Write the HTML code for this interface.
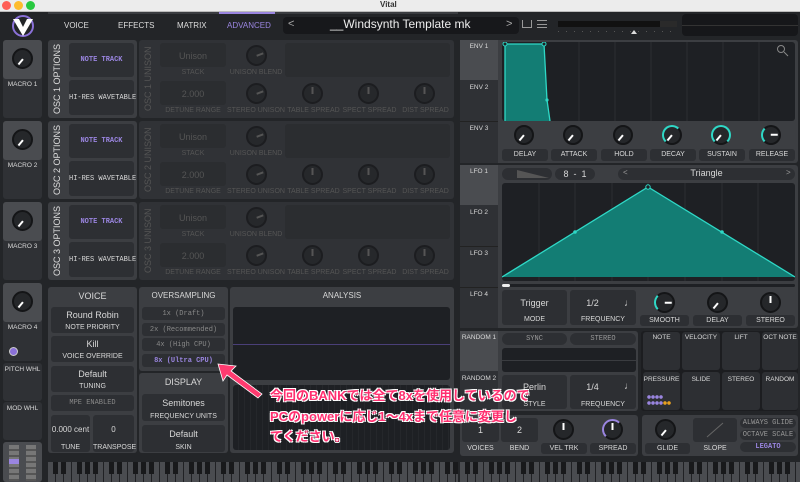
<!DOCTYPE html>
<html><head><meta charset="utf-8"><style>
*{box-sizing:border-box;margin:0;padding:0}
body{width:800px;height:482px;overflow:hidden;background:#232528;font-family:"Liberation Sans","Noto Sans CJK JP",sans-serif;position:relative;color:#ddd}
.a{position:absolute}
.p{position:absolute;background:#3c3e42;border-radius:3px}
.d{position:absolute;background:#2d2f33;border-radius:3px}
.g{position:absolute;background:#1e2024;border-radius:3px}
.l{position:absolute;font-size:7px;text-align:center;color:#d8d8d8;white-space:nowrap}
.m{font-family:"Liberation Mono",monospace}
.k{position:absolute;border-radius:50%;background:#25272a;border:2px solid #141517}
.k::after{content:'';position:absolute;left:50%;top:50%;width:1.5px;height:7px;margin-left:-1px;background:#fff;transform-origin:top;transform:rotate(40deg)}
.f::after{background:#555;transform:rotate(-110deg)}
.u::after{transform:rotate(180deg)}
.r::after{transform:rotate(-90deg)}
.v{position:absolute;writing-mode:vertical-rl;transform:rotate(180deg);font-size:9px;text-align:center}
.kb{position:absolute;top:462px;height:20px;background:
linear-gradient(90deg,transparent 5px,#18191b 5px 10px,transparent 10px 13px,#18191b 13px 18px,transparent 18px 29px,#18191b 29px 34px,transparent 34px 37px,#18191b 37px 42px,transparent 42px 45px,#18191b 45px 50px,transparent 50px) 0 0/56px 12px repeat-x,
repeating-linear-gradient(90deg,#4a4c50 0 7px,#202124 7px 8px)}
</style></head><body>
<div class="a" style="left:0;top:0;width:800px;height:12px;background:#ececec;border-bottom:1px solid #bbb"></div>
<div class="a" style="left:2px;top:1px;width:9px;height:9px;border-radius:50%;background:#fe5f57"></div>
<div class="a" style="left:14px;top:1px;width:9px;height:9px;border-radius:50%;background:#febc2e"></div>
<div class="a" style="left:26px;top:1px;width:9px;height:9px;border-radius:50%;background:#28c840"></div>
<div class="a" style="left:380px;top:0;font-size:8px;color:#333;font-weight:bold">Vital</div>
<div class="a" style="left:48px;top:12px;width:410px;height:2px;background:#3a3c40"></div>
<div class="a" style="left:219px;top:12px;width:56px;height:2px;background:#9a85e0"></div>
<svg class="a" style="left:10px;top:14px" width="26" height="24" viewBox="0 0 26 24"><circle cx="13" cy="12" r="10" fill="none" stroke="#8a70d8" stroke-width="2"/><path d="M3 5 L13 22 L23 5 L17 5 L13 13 L9 5Z" fill="#fff"/></svg>
<div class="a" style="left:64px;top:21px;font-size:8px;color:#ddd">VOICE</div>
<div class="a" style="left:118px;top:21px;font-size:8px;color:#ddd">EFFECTS</div>
<div class="a" style="left:177px;top:21px;font-size:8px;color:#ddd">MATRIX</div>
<div class="a" style="left:227px;top:21px;font-size:8px;color:#9a85e0">ADVANCED</div>
<div class="a" style="left:283px;top:17px;width:236px;height:17px;background:#17181b;border-radius:4px"></div>
<div class="a" style="left:288px;top:18px;font-size:11px;color:#aaa">&lt;</div>
<div class="a" style="left:506px;top:18px;font-size:11px;color:#aaa">&gt;</div>
<div class="a" style="left:330px;top:17px;font-size:12px;color:#eee">__Windsynth Template mk</div>
<div class="a" style="left:522px;top:20px;width:10px;height:8px;border:1px solid #999;border-top:none"></div>
<div class="a" style="left:537px;top:20px;width:10px;height:8px;border-top:1px solid #999;border-bottom:1px solid #999"></div>
<div class="a" style="left:537px;top:24px;width:10px;height:1px;background:#999"></div>
<div class="a" style="left:558px;top:21px;width:102px;height:6px;background:#111"></div>
<div class="a" style="left:660px;top:21px;width:17px;height:6px;background:#2a2a2a"></div>
<div class="a" style="left:558px;top:31px;width:120px;height:1px;background:repeating-linear-gradient(90deg,#555 0 1px,transparent 1px 8px)"></div>
<div class="a" style="left:631px;top:30px;width:0;height:0;border-left:3px solid transparent;border-right:3px solid transparent;border-bottom:4px solid #ddd"></div>
<div class="a" style="left:682px;top:14px;width:116px;height:22px;background:#16171a;border-radius:4px"></div>
<div class="a" style="left:682px;top:25px;width:116px;height:1px;background:#333"></div>

<div class="p" style="left:3px;top:40px;width:39px;height:78px;background:#2f3135"></div>
<div class="p" style="left:3px;top:40px;width:39px;height:39px;background:#4a4c50"></div>
<div class="k" style="left:12px;top:48px;width:21px;height:21px"></div>
<div class="l" style="left:3px;top:81px;width:39px;font-size:6.5px">MACRO 1</div>
<div class="p" style="left:3px;top:121px;width:39px;height:78px;background:#2f3135"></div>
<div class="p" style="left:3px;top:121px;width:39px;height:39px;background:#4a4c50"></div>
<div class="k" style="left:12px;top:129px;width:21px;height:21px"></div>
<div class="l" style="left:3px;top:162px;width:39px;font-size:6.5px">MACRO 2</div>
<div class="p" style="left:3px;top:202px;width:39px;height:78px;background:#2f3135"></div>
<div class="p" style="left:3px;top:202px;width:39px;height:39px;background:#4a4c50"></div>
<div class="k" style="left:12px;top:210px;width:21px;height:21px"></div>
<div class="l" style="left:3px;top:243px;width:39px;font-size:6.5px">MACRO 3</div>
<div class="p" style="left:3px;top:283px;width:39px;height:78px;background:#2f3135"></div>
<div class="p" style="left:3px;top:283px;width:39px;height:39px;background:#4a4c50"></div>
<div class="k" style="left:12px;top:291px;width:21px;height:21px"></div>
<div class="l" style="left:3px;top:324px;width:39px;font-size:6.5px">MACRO 4</div>
<div class="a" style="left:9px;top:347px;width:9px;height:9px;border-radius:50%;background:#8a70d8;border:1px solid #ccc"></div>
<div class="p" style="left:3px;top:363px;width:39px;height:38px;background:#2f3135"></div>
<div class="l" style="left:3px;top:366px;width:39px;font-size:6.5px">PITCH WHL</div>
<div class="p" style="left:3px;top:402px;width:39px;height:38px;background:#2f3135"></div>
<div class="l" style="left:3px;top:405px;width:39px;font-size:6.5px">MOD WHL</div>
<div class="p" style="left:3px;top:442px;width:39px;height:40px;background:#4a4c50"></div>
<div class="a" style="left:9px;top:445px;width:10px;height:36px;background:repeating-linear-gradient(#777 0 4px,#555 4px 6px)"></div>
<div class="a" style="left:9px;top:459px;width:10px;height:5px;background:#9a85e0"></div>
<div class="a" style="left:26px;top:445px;width:10px;height:36px;background:repeating-linear-gradient(#777 0 4px,#555 4px 6px)"></div>

<div class="p" style="left:48px;top:40px;width:89px;height:78px"></div>
<div class="v" style="left:52px;top:40px;height:78px;width:12px;color:#ddd">OSC 1 OPTIONS</div>
<div class="d" style="left:69px;top:43px;width:65px;height:34px"></div>
<div class="l m" style="left:69px;top:56px;width:65px;color:#9a85e0;font-weight:bold">NOTE TRACK</div>
<div class="d" style="left:69px;top:80px;width:65px;height:35px"></div>
<div class="l m" style="left:69px;top:94px;width:65px">HI-RES WAVETABLE</div>
<div class="p" style="left:48px;top:121px;width:89px;height:78px"></div>
<div class="v" style="left:52px;top:121px;height:78px;width:12px;color:#ddd">OSC 2 OPTIONS</div>
<div class="d" style="left:69px;top:124px;width:65px;height:34px"></div>
<div class="l m" style="left:69px;top:137px;width:65px;color:#9a85e0;font-weight:bold">NOTE TRACK</div>
<div class="d" style="left:69px;top:161px;width:65px;height:35px"></div>
<div class="l m" style="left:69px;top:175px;width:65px">HI-RES WAVETABLE</div>
<div class="p" style="left:48px;top:202px;width:89px;height:78px"></div>
<div class="v" style="left:52px;top:202px;height:78px;width:12px;color:#ddd">OSC 3 OPTIONS</div>
<div class="d" style="left:69px;top:205px;width:65px;height:34px"></div>
<div class="l m" style="left:69px;top:218px;width:65px;color:#9a85e0;font-weight:bold">NOTE TRACK</div>
<div class="d" style="left:69px;top:242px;width:65px;height:35px"></div>
<div class="l m" style="left:69px;top:256px;width:65px">HI-RES WAVETABLE</div>

<div class="p" style="left:139px;top:40px;width:315px;height:78px;background:#303236"></div>
<div class="p" style="left:139px;top:121px;width:315px;height:78px;background:#303236"></div>
<div class="p" style="left:139px;top:202px;width:315px;height:78px;background:#303236"></div>
<div class="v" style="left:143px;top:40px;height:78px;width:12px;color:#555">OSC 1 UNISON</div>
<div class="v" style="left:143px;top:121px;height:78px;width:12px;color:#555">OSC 2 UNISON</div>
<div class="v" style="left:143px;top:202px;height:78px;width:12px;color:#555">OSC 3 UNISON</div>
<div class="d" style="left:160px;top:43px;width:66px;height:24px;background:#2b2d30"></div>
<div class="d" style="left:160px;top:81px;width:66px;height:24px;background:#2b2d30"></div>
<div class="d" style="left:285px;top:43px;width:165px;height:34px;background:#2b2d30"></div>
<div class="d" style="left:160px;top:124px;width:66px;height:24px;background:#2b2d30"></div>
<div class="d" style="left:160px;top:162px;width:66px;height:24px;background:#2b2d30"></div>
<div class="d" style="left:285px;top:124px;width:165px;height:34px;background:#2b2d30"></div>
<div class="d" style="left:160px;top:205px;width:66px;height:24px;background:#2b2d30"></div>
<div class="d" style="left:160px;top:243px;width:66px;height:24px;background:#2b2d30"></div>
<div class="d" style="left:285px;top:205px;width:165px;height:34px;background:#2b2d30"></div>
<div class="l" style="left:160px;top:51px;width:66px;font-size:9px;color:#555">Unison</div>
<div class="l" style="left:160px;top:69px;width:66px;color:#555">STACK</div>
<div class="l" style="left:160px;top:89px;width:66px;font-size:9px;color:#555">2.000</div>
<div class="l" style="left:160px;top:107px;width:66px;color:#555">DETUNE RANGE</div>
<div class="l" style="left:226px;top:69px;width:60px;color:#555">UNISON BLEND</div>
<div class="l" style="left:226px;top:107px;width:60px;color:#555">STEREO UNISON</div>
<div class="l" style="left:286px;top:107px;width:55px;color:#555">TABLE SPREAD</div>
<div class="l" style="left:342px;top:107px;width:55px;color:#555">SPECT SPREAD</div>
<div class="l" style="left:398px;top:107px;width:55px;color:#555">DIST SPREAD</div>
<div class="l" style="left:160px;top:132px;width:66px;font-size:9px;color:#555">Unison</div>
<div class="l" style="left:160px;top:150px;width:66px;color:#555">STACK</div>
<div class="l" style="left:160px;top:170px;width:66px;font-size:9px;color:#555">2.000</div>
<div class="l" style="left:160px;top:188px;width:66px;color:#555">DETUNE RANGE</div>
<div class="l" style="left:226px;top:150px;width:60px;color:#555">UNISON BLEND</div>
<div class="l" style="left:226px;top:188px;width:60px;color:#555">STEREO UNISON</div>
<div class="l" style="left:286px;top:188px;width:55px;color:#555">TABLE SPREAD</div>
<div class="l" style="left:342px;top:188px;width:55px;color:#555">SPECT SPREAD</div>
<div class="l" style="left:398px;top:188px;width:55px;color:#555">DIST SPREAD</div>
<div class="l" style="left:160px;top:213px;width:66px;font-size:9px;color:#555">Unison</div>
<div class="l" style="left:160px;top:231px;width:66px;color:#555">STACK</div>
<div class="l" style="left:160px;top:251px;width:66px;font-size:9px;color:#555">2.000</div>
<div class="l" style="left:160px;top:269px;width:66px;color:#555">DETUNE RANGE</div>
<div class="l" style="left:226px;top:231px;width:60px;color:#555">UNISON BLEND</div>
<div class="l" style="left:226px;top:269px;width:60px;color:#555">STEREO UNISON</div>
<div class="l" style="left:286px;top:269px;width:55px;color:#555">TABLE SPREAD</div>
<div class="l" style="left:342px;top:269px;width:55px;color:#555">SPECT SPREAD</div>
<div class="l" style="left:398px;top:269px;width:55px;color:#555">DIST SPREAD</div>
<div class="k f" style="left:246px;top:45px;width:21px;height:21px;background:#26282b;border-color:#1c1d20"></div>
<div class="k f" style="left:246px;top:83px;width:21px;height:21px;background:#26282b;border-color:#1c1d20"></div>
<div class="k f u" style="left:302px;top:83px;width:21px;height:21px;background:#26282b;border-color:#1c1d20"></div>
<div class="k f u" style="left:358px;top:83px;width:21px;height:21px;background:#26282b;border-color:#1c1d20"></div>
<div class="k f u" style="left:414px;top:83px;width:21px;height:21px;background:#26282b;border-color:#1c1d20"></div>
<div class="k f" style="left:246px;top:126px;width:21px;height:21px;background:#26282b;border-color:#1c1d20"></div>
<div class="k f" style="left:246px;top:164px;width:21px;height:21px;background:#26282b;border-color:#1c1d20"></div>
<div class="k f u" style="left:302px;top:164px;width:21px;height:21px;background:#26282b;border-color:#1c1d20"></div>
<div class="k f u" style="left:358px;top:164px;width:21px;height:21px;background:#26282b;border-color:#1c1d20"></div>
<div class="k f u" style="left:414px;top:164px;width:21px;height:21px;background:#26282b;border-color:#1c1d20"></div>
<div class="k f" style="left:246px;top:207px;width:21px;height:21px;background:#26282b;border-color:#1c1d20"></div>
<div class="k f" style="left:246px;top:245px;width:21px;height:21px;background:#26282b;border-color:#1c1d20"></div>
<div class="k f u" style="left:302px;top:245px;width:21px;height:21px;background:#26282b;border-color:#1c1d20"></div>
<div class="k f u" style="left:358px;top:245px;width:21px;height:21px;background:#26282b;border-color:#1c1d20"></div>
<div class="k f u" style="left:414px;top:245px;width:21px;height:21px;background:#26282b;border-color:#1c1d20"></div>

<div class="p" style="left:48px;top:287px;width:89px;height:166px"></div>
<div class="l" style="left:48px;top:291px;width:89px;font-size:9px">VOICE</div>
<div class="d" style="left:51px;top:307px;width:83px;height:26px"></div>
<div class="l" style="left:51px;top:310px;width:83px;font-size:9px">Round Robin</div>
<div class="l" style="left:51px;top:324px;width:83px">NOTE PRIORITY</div>
<div class="d" style="left:51px;top:336px;width:83px;height:26px"></div>
<div class="l" style="left:51px;top:339px;width:83px;font-size:9px">Kill</div>
<div class="l" style="left:51px;top:353px;width:83px">VOICE OVERRIDE</div>
<div class="d" style="left:51px;top:366px;width:83px;height:26px"></div>
<div class="l" style="left:51px;top:369px;width:83px;font-size:9px">Default</div>
<div class="l" style="left:51px;top:383px;width:83px">TUNING</div>
<div class="d" style="left:51px;top:395px;width:83px;height:16px"></div>
<div class="l m" style="left:51px;top:399px;width:83px;color:#888">MPE ENABLED</div>
<div class="d" style="left:51px;top:415px;width:39px;height:37px"></div>
<div class="l" style="left:51px;top:425px;width:39px;font-size:8px">0.000 cent</div>
<div class="l" style="left:51px;top:444px;width:39px">TUNE</div>
<div class="d" style="left:93px;top:415px;width:41px;height:37px"></div>
<div class="l" style="left:93px;top:425px;width:41px;font-size:8px">0</div>
<div class="l" style="left:93px;top:444px;width:41px">TRANSPOSE</div>

<div class="p" style="left:139px;top:287px;width:89px;height:84px"></div>
<div class="l" style="left:139px;top:291px;width:89px;font-size:8px">OVERSAMPLING</div>
<div class="d" style="left:142px;top:307px;width:83px;height:13px"></div>
<div class="l m" style="left:142px;top:310px;width:83px;color:#888">1x (Draft)</div>
<div class="d" style="left:142px;top:323px;width:83px;height:13px"></div>
<div class="l m" style="left:142px;top:326px;width:83px;color:#888">2x (Recommended)</div>
<div class="d" style="left:142px;top:338px;width:83px;height:13px"></div>
<div class="l m" style="left:142px;top:341px;width:83px;color:#888">4x (High CPU)</div>
<div class="d" style="left:142px;top:354px;width:83px;height:13px"></div>
<div class="l m" style="left:142px;top:357px;width:83px;color:#9a85e0;font-weight:bold">8x (Ultra CPU)</div>
<div class="p" style="left:139px;top:373px;width:89px;height:80px"></div>
<div class="l" style="left:139px;top:377px;width:89px;font-size:9px">DISPLAY</div>
<div class="d" style="left:142px;top:394px;width:83px;height:27px"></div>
<div class="l" style="left:142px;top:398px;width:83px;font-size:9px">Semitones</div>
<div class="l" style="left:142px;top:413px;width:83px">FREQUENCY UNITS</div>
<div class="d" style="left:142px;top:425px;width:83px;height:27px"></div>
<div class="l" style="left:142px;top:429px;width:83px;font-size:9px">Default</div>
<div class="l" style="left:142px;top:444px;width:83px">SKIN</div>

<div class="p" style="left:230px;top:287px;width:224px;height:166px"></div>
<div class="l" style="left:230px;top:291px;width:224px;font-size:8px">ANALYSIS</div>
<div class="g" style="left:233px;top:307px;width:217px;height:73px"></div>
<div class="a" style="left:233px;top:344px;width:217px;height:1px;background:#4a3f78"></div>
<div class="g" style="left:233px;top:385px;width:217px;height:65px;background:repeating-linear-gradient(90deg,#1e2024 0 5px,#25272b 5px 6px)"></div>

<div class="kb" style="left:48px;width:410px"></div>
<div class="kb" style="left:460px;width:340px"></div>

<div class="p" style="left:460px;top:40px;width:338px;height:123px"></div>
<div class="a" style="left:460px;top:40px;width:38px;height:40px;background:#4a4c50"></div>
<div class="a" style="left:460px;top:80px;width:38px;height:83px;background:#2f3135"></div>
<div class="a" style="left:460px;top:121px;width:38px;height:1px;background:#222"></div>
<div class="l" style="left:460px;top:43px;width:38px;font-size:6.5px">ENV 1</div>
<div class="l" style="left:460px;top:84px;width:38px;font-size:6.5px">ENV 2</div>
<div class="l" style="left:460px;top:125px;width:38px;font-size:6.5px">ENV 3</div>
<svg class="a" style="left:502px;top:42px" width="293" height="79"><rect width="293" height="79" rx="3" fill="#1e2024"/>
<g stroke="#2c2e32"><line x1="41" y1="0" x2="41" y2="79"/><line x1="77" y1="0" x2="77" y2="79"/><line x1="113" y1="0" x2="113" y2="79"/><line x1="149" y1="0" x2="149" y2="79"/><line x1="185" y1="0" x2="185" y2="79"/><line x1="221" y1="0" x2="221" y2="79"/><line x1="257" y1="0" x2="257" y2="79"/></g>
<path d="M3 79 L3 2 L42 2 L45 58 L48 79Z" fill="#137d74"/><path d="M3 79 L3 2 L42 2 L45 58 L48 79" fill="none" stroke="#2fd8c6" stroke-width="1.3"/>
<circle cx="3" cy="2" r="2" fill="#1e2024" stroke="#2fd8c6"/><circle cx="42" cy="2" r="2" fill="#1e2024" stroke="#2fd8c6"/><circle cx="45" cy="58" r="1.6" fill="#2fd8c6"/>
<circle cx="279" cy="7" r="3.5" fill="none" stroke="#888"/><line x1="282" y1="10" x2="286" y2="14" stroke="#888"/></svg>
<div class="k" style="left:514px;top:125px;width:20px;height:20px"></div>
<div class="k" style="left:563px;top:125px;width:20px;height:20px"></div>
<div class="k" style="left:613px;top:125px;width:20px;height:20px"></div>
<div class="k" style="left:662px;top:125px;width:20px;height:20px;border-top-color:#2fd8c6;border-left-color:#2fd8c6"></div>
<div class="k" style="left:711px;top:125px;width:20px;height:20px;border-color:#2fd8c6;border-bottom-color:#141517"></div>
<div class="k r" style="left:761px;top:125px;width:20px;height:20px;border-left-color:#2fd8c6"></div>
<div class="d" style="left:502px;top:149px;width:46px;height:12px"></div><div class="l" style="left:502px;top:151px;width:46px">DELAY</div>
<div class="d" style="left:551px;top:149px;width:46px;height:12px"></div><div class="l" style="left:551px;top:151px;width:46px">ATTACK</div>
<div class="d" style="left:601px;top:149px;width:46px;height:12px"></div><div class="l" style="left:601px;top:151px;width:46px">HOLD</div>
<div class="d" style="left:650px;top:149px;width:46px;height:12px"></div><div class="l" style="left:650px;top:151px;width:46px">DECAY</div>
<div class="d" style="left:699px;top:149px;width:46px;height:12px"></div><div class="l" style="left:699px;top:151px;width:46px">SUSTAIN</div>
<div class="d" style="left:749px;top:149px;width:46px;height:12px"></div><div class="l" style="left:749px;top:151px;width:46px">RELEASE</div>

<div class="p" style="left:460px;top:165px;width:338px;height:163px"></div>
<div class="a" style="left:460px;top:165px;width:38px;height:40px;background:#4a4c50"></div>
<div class="a" style="left:460px;top:205px;width:38px;height:123px;background:#2f3135"></div>
<div class="a" style="left:460px;top:246px;width:38px;height:1px;background:#222"></div>
<div class="a" style="left:460px;top:287px;width:38px;height:1px;background:#222"></div>
<div class="l" style="left:460px;top:168px;width:38px;font-size:6.5px">LFO 1</div>
<div class="l" style="left:460px;top:209px;width:38px;font-size:6.5px">LFO 2</div>
<div class="l" style="left:460px;top:250px;width:38px;font-size:6.5px">LFO 3</div>
<div class="l" style="left:460px;top:291px;width:38px;font-size:6.5px">LFO 4</div>
<div class="d" style="left:502px;top:168px;width:50px;height:12px;border-radius:6px"></div>
<div class="a" style="left:517px;top:170px;width:32px;height:8px;background:#555;clip-path:polygon(0 0,100% 100%,0 100%)"></div>
<div class="d" style="left:555px;top:168px;width:40px;height:12px;border-radius:6px"></div>
<div class="l" style="left:555px;top:169px;width:40px;font-size:9px">8 &nbsp;-&nbsp; 1</div>
<div class="d" style="left:618px;top:168px;width:177px;height:12px;border-radius:6px"></div>
<div class="l" style="left:618px;top:168px;width:177px;font-size:9px">Triangle</div>
<div class="a" style="left:623px;top:168px;font-size:8px;color:#999">&lt;</div>
<div class="a" style="left:786px;top:168px;font-size:8px;color:#999">&gt;</div>
<svg class="a" style="left:502px;top:183px" width="293" height="98"><rect width="293" height="98" rx="3" fill="#1e2024"/>
<g stroke="#2c2e32"><line x1="37" y1="0" x2="37" y2="98"/><line x1="73" y1="0" x2="73" y2="98"/><line x1="110" y1="0" x2="110" y2="98"/><line x1="146" y1="0" x2="146" y2="98"/><line x1="183" y1="0" x2="183" y2="98"/><line x1="220" y1="0" x2="220" y2="98"/><line x1="256" y1="0" x2="256" y2="98"/></g>
<path d="M0 94 L146 4 L293 94Z" fill="#137d74"/><path d="M0 94 L146 4 L293 94" fill="none" stroke="#2fd8c6" stroke-width="1.3"/>
<circle cx="146" cy="4" r="2.2" fill="#1e2024" stroke="#2fd8c6"/><circle cx="73" cy="49" r="1.8" fill="#2fd8c6"/><circle cx="220" cy="49" r="1.8" fill="#2fd8c6"/></svg>
<div class="a" style="left:502px;top:284px;width:293px;height:3px;background:#1e2024;border-radius:2px"></div>
<div class="a" style="left:502px;top:284px;width:8px;height:3px;background:#eee;border-radius:2px"></div>
<div class="d" style="left:502px;top:290px;width:65px;height:35px"></div>
<div class="l" style="left:502px;top:298px;width:65px;font-size:9px">Trigger</div>
<div class="l" style="left:502px;top:316px;width:65px">MODE</div>
<div class="d" style="left:570px;top:290px;width:66px;height:35px"></div>
<div class="l" style="left:570px;top:298px;width:45px;font-size:9px">1/2</div>
<div class="a" style="left:624px;top:298px;font-size:10px;color:#ccc">♩</div>
<div class="l" style="left:570px;top:316px;width:66px">FREQUENCY</div>
<div class="k r" style="left:654px;top:292px;width:21px;height:21px;border-left-color:#2fd8c6"></div>
<div class="k" style="left:707px;top:292px;width:21px;height:21px"></div>
<div class="k u" style="left:760px;top:292px;width:21px;height:21px"></div>
<div class="d" style="left:640px;top:315px;width:49px;height:11px"></div><div class="l" style="left:640px;top:317px;width:49px">SMOOTH</div>
<div class="d" style="left:693px;top:315px;width:49px;height:11px"></div><div class="l" style="left:693px;top:317px;width:49px">DELAY</div>
<div class="d" style="left:746px;top:315px;width:49px;height:11px"></div><div class="l" style="left:746px;top:317px;width:49px">STEREO</div>

<div class="p" style="left:460px;top:331px;width:178px;height:80px"></div>
<div class="a" style="left:460px;top:331px;width:38px;height:40px;background:#4a4c50"></div>
<div class="a" style="left:460px;top:371px;width:38px;height:40px;background:#2f3135"></div>
<div class="l" style="left:460px;top:334px;width:38px;font-size:6.5px">RANDOM 1</div>
<div class="l" style="left:460px;top:375px;width:38px;font-size:6.5px">RANDOM 2</div>
<div class="d" style="left:502px;top:333px;width:65px;height:12px;border-radius:6px"></div><div class="l m" style="left:502px;top:335px;width:65px;color:#999">SYNC</div>
<div class="d" style="left:570px;top:333px;width:66px;height:12px;border-radius:6px"></div><div class="l m" style="left:570px;top:335px;width:66px;color:#999">STEREO</div>
<div class="g" style="left:502px;top:348px;width:134px;height:24px"></div>
<div class="a" style="left:502px;top:360px;width:134px;height:1px;background:#3a3c40"></div>
<div class="d" style="left:502px;top:375px;width:65px;height:34px"></div>
<div class="l" style="left:502px;top:382px;width:65px;font-size:9px">Perlin</div>
<div class="l" style="left:502px;top:401px;width:65px">STYLE</div>
<div class="d" style="left:570px;top:375px;width:66px;height:34px"></div>
<div class="l" style="left:570px;top:382px;width:45px;font-size:9px">1/4</div>
<div class="a" style="left:624px;top:381px;font-size:10px;color:#ccc">♩</div>
<div class="l" style="left:570px;top:401px;width:66px">FREQUENCY</div>

<div class="p" style="left:641px;top:331px;width:157px;height:80px;background:#1c1d20"></div>
<div class="d" style="left:643px;top:332px;width:37px;height:38px"></div>
<div class="d" style="left:682px;top:332px;width:38px;height:38px"></div>
<div class="d" style="left:722px;top:332px;width:38px;height:38px"></div>
<div class="d" style="left:762px;top:332px;width:36px;height:38px"></div>
<div class="d" style="left:643px;top:372px;width:37px;height:38px"></div>
<div class="d" style="left:682px;top:372px;width:38px;height:38px"></div>
<div class="d" style="left:722px;top:372px;width:38px;height:38px"></div>
<div class="d" style="left:762px;top:372px;width:36px;height:38px"></div>
<div class="l" style="left:643px;top:334px;width:37px;font-size:6.5px">NOTE</div>
<div class="l" style="left:682px;top:334px;width:38px;font-size:6.5px">VELOCITY</div>
<div class="l" style="left:722px;top:334px;width:38px;font-size:6.5px">LIFT</div>
<div class="l" style="left:762px;top:334px;width:36px;font-size:6.5px">OCT NOTE</div>
<div class="l" style="left:643px;top:376px;width:37px;font-size:6.5px">PRESSURE</div>
<div class="l" style="left:682px;top:376px;width:38px;font-size:6.5px">SLIDE</div>
<div class="l" style="left:722px;top:376px;width:38px;font-size:6.5px">STEREO</div>
<div class="l" style="left:762px;top:376px;width:36px;font-size:6.5px">RANDOM</div>
<div class="a" style="left:647px;top:395px;width:16px;height:4px;background:radial-gradient(circle,#9a85e0 1.6px,transparent 2px) 0 0/4px 4px"></div>
<div class="a" style="left:647px;top:401px;width:16px;height:4px;background:radial-gradient(circle,#9a85e0 1.6px,transparent 2px) 0 0/4px 4px"></div>
<div class="a" style="left:663px;top:401px;width:8px;height:4px;background:radial-gradient(circle,#e6a020 1.6px,transparent 2px) 0 0/4px 4px"></div>

<div class="p" style="left:460px;top:415px;width:178px;height:41px"></div>
<div class="d" style="left:462px;top:418px;width:37px;height:24px"></div><div class="l" style="left:462px;top:425px;width:37px;font-size:9px">1</div><div class="l" style="left:462px;top:445px;width:37px">VOICES</div>
<div class="d" style="left:501px;top:418px;width:37px;height:24px"></div><div class="l" style="left:501px;top:425px;width:37px;font-size:9px">2</div><div class="l" style="left:501px;top:445px;width:37px">BEND</div>
<div class="k u" style="left:553px;top:419px;width:21px;height:21px"></div>
<div class="k u" style="left:602px;top:419px;width:21px;height:21px;border-left-color:#9a85e0;border-top-color:#9a85e0"></div>
<div class="d" style="left:541px;top:443px;width:46px;height:11px"></div><div class="l" style="left:541px;top:445px;width:46px">VEL TRK</div>
<div class="d" style="left:590px;top:443px;width:46px;height:11px"></div><div class="l" style="left:590px;top:445px;width:46px">SPREAD</div>
<div class="p" style="left:642px;top:415px;width:156px;height:41px"></div>
<div class="k" style="left:655px;top:419px;width:21px;height:21px"></div>
<div class="d" style="left:645px;top:443px;width:45px;height:11px"></div><div class="l" style="left:645px;top:445px;width:45px">GLIDE</div>
<div class="d" style="left:693px;top:418px;width:44px;height:24px"></div>
<svg class="a" style="left:705px;top:421px" width="20" height="18"><line x1="2" y1="16" x2="18" y2="2" stroke="#666"/></svg>
<div class="l" style="left:693px;top:445px;width:44px">SLOPE</div>
<div class="d" style="left:740px;top:418px;width:56px;height:10px;border-radius:5px"></div><div class="l m" style="left:740px;top:419px;width:56px;color:#999">ALWAYS GLIDE</div>
<div class="d" style="left:740px;top:430px;width:56px;height:10px;border-radius:5px"></div><div class="l m" style="left:740px;top:431px;width:56px;color:#999">OCTAVE SCALE</div>
<div class="d" style="left:740px;top:442px;width:56px;height:10px;border-radius:5px"></div><div class="l m" style="left:740px;top:443px;width:56px;color:#9a85e0;font-weight:bold">LEGATO</div>

<svg class="a" style="left:210px;top:356px" width="60" height="45"><path d="M8 8 L26 10 L21 15 L52 38 L48 42 L17 19 L13 25Z" fill="#ff3b70" stroke="#fff" stroke-width="0.8"/></svg>
<div class="a" style="left:270px;top:386px;font-size:13px;line-height:20.5px;font-weight:bold;color:#ff3070;text-shadow:-1px -1px 0 #fff,1px -1px 0 #fff,-1px 1px 0 #fff,1px 1px 0 #fff;white-space:nowrap">今回のBANKでは全て8xを使用しているので<br>PCのpowerに応じ1～4xまで任意に変更し<br>てください。</div>
</body></html>
